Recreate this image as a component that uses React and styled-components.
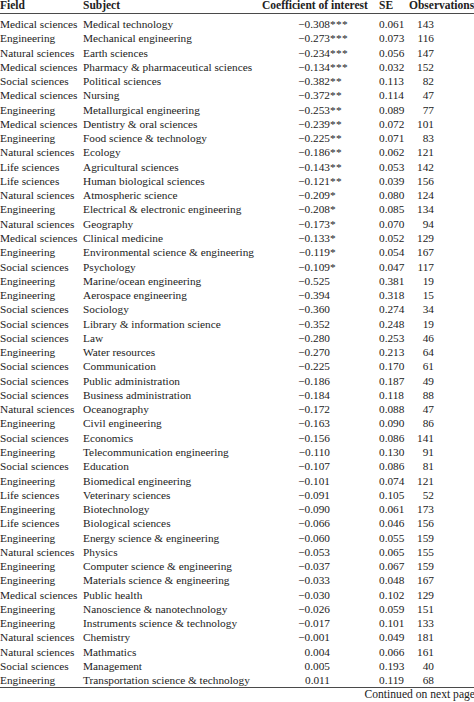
import React from "react";
import styled, { createGlobalStyle } from "styled-components";

const GlobalStyle = createGlobalStyle`
  html, body {
    margin: 0;
    padding: 0;
    background: #ffffff;
  }
  body {
    font-family: "Liberation Serif", "Times New Roman", serif;
    color: #222222;
    overflow: hidden;
  }
`;

const Page = styled.div`
  width: 474px;
  height: 702px;
  overflow: hidden;
  font-size: 11.3px;
`;

const Grid = styled.div`
  display: grid;
  grid-template-columns: 83px 179px 117px 30px 1fr;
  white-space: nowrap;
`;

const HeaderRow = styled(Grid)`
  margin-top: -1px;
  height: 14px;
  line-height: 13px;
  font-weight: bold;
  font-size: 11.5px;
  border-bottom: 1px solid #4a4a4a;
`;

const Body = styled.div`
  padding-top: 3px;
  border-bottom: 1px solid #4a4a4a;
`;

const Row = styled(Grid)`
  height: 14.28px;
  line-height: 14.28px;
`;

const Cell = styled.div`
  overflow: visible;
`;

const Coef = styled.div`
  display: flex;
`;

const CoefNum = styled.span`
  width: 68px;
  text-align: right;
`;

const Stars = styled.span`
  letter-spacing: 0.4px;
`;

const Obs = styled.span`
  display: inline-block;
  width: 25px;
  text-align: right;
`;

const Footer = styled.div`
  text-align: right;
  margin-right: -1px;
  line-height: 13px;
  font-size: 11.6px;
`;

const rows = [
  ["Medical sciences", "Medical technology", "−0.308", "***", "0.061", 143],
  ["Engineering", "Mechanical engineering", "−0.273", "***", "0.073", 116],
  ["Natural sciences", "Earth sciences", "−0.234", "***", "0.056", 147],
  ["Medical sciences", "Pharmacy & pharmaceutical sciences", "−0.134", "***", "0.032", 152],
  ["Social sciences", "Political sciences", "−0.382", "**", "0.113", 82],
  ["Medical sciences", "Nursing", "−0.372", "**", "0.114", 47],
  ["Engineering", "Metallurgical engineering", "−0.253", "**", "0.089", 77],
  ["Medical sciences", "Dentistry & oral sciences", "−0.239", "**", "0.072", 101],
  ["Engineering", "Food science & technology", "−0.225", "**", "0.071", 83],
  ["Natural sciences", "Ecology", "−0.186", "**", "0.062", 121],
  ["Life sciences", "Agricultural sciences", "−0.143", "**", "0.053", 142],
  ["Life sciences", "Human biological sciences", "−0.121", "**", "0.039", 156],
  ["Natural sciences", "Atmospheric science", "−0.209", "*", "0.080", 124],
  ["Engineering", "Electrical & electronic engineering", "−0.208", "*", "0.085", 134],
  ["Natural sciences", "Geography", "−0.173", "*", "0.070", 94],
  ["Medical sciences", "Clinical medicine", "−0.133", "*", "0.052", 129],
  ["Engineering", "Environmental science & engineering", "−0.119", "*", "0.054", 167],
  ["Social sciences", "Psychology", "−0.109", "*", "0.047", 117],
  ["Engineering", "Marine/ocean engineering", "−0.525", "", "0.381", 19],
  ["Engineering", "Aerospace engineering", "−0.394", "", "0.318", 15],
  ["Social sciences", "Sociology", "−0.360", "", "0.274", 34],
  ["Social sciences", "Library & information science", "−0.352", "", "0.248", 19],
  ["Social sciences", "Law", "−0.280", "", "0.253", 46],
  ["Engineering", "Water resources", "−0.270", "", "0.213", 64],
  ["Social sciences", "Communication", "−0.225", "", "0.170", 61],
  ["Social sciences", "Public administration", "−0.186", "", "0.187", 49],
  ["Social sciences", "Business administration", "−0.184", "", "0.118", 88],
  ["Natural sciences", "Oceanography", "−0.172", "", "0.088", 47],
  ["Engineering", "Civil engineering", "−0.163", "", "0.090", 86],
  ["Social sciences", "Economics", "−0.156", "", "0.086", 141],
  ["Engineering", "Telecommunication engineering", "−0.110", "", "0.130", 91],
  ["Social sciences", "Education", "−0.107", "", "0.086", 81],
  ["Engineering", "Biomedical engineering", "−0.101", "", "0.074", 121],
  ["Life sciences", "Veterinary sciences", "−0.091", "", "0.105", 52],
  ["Engineering", "Biotechnology", "−0.090", "", "0.061", 173],
  ["Life sciences", "Biological sciences", "−0.066", "", "0.046", 156],
  ["Engineering", "Energy science & engineering", "−0.060", "", "0.055", 159],
  ["Natural sciences", "Physics", "−0.053", "", "0.065", 155],
  ["Engineering", "Computer science & engineering", "−0.037", "", "0.067", 159],
  ["Engineering", "Materials science & engineering", "−0.033", "", "0.048", 167],
  ["Medical sciences", "Public health", "−0.030", "", "0.102", 129],
  ["Engineering", "Nanoscience & nanotechnology", "−0.026", "", "0.059", 151],
  ["Engineering", "Instruments science & technology", "−0.017", "", "0.101", 133],
  ["Natural sciences", "Chemistry", "−0.001", "", "0.049", 181],
  ["Natural sciences", "Mathmatics", "0.004", "", "0.066", 161],
  ["Social sciences", "Management", "0.005", "", "0.193", 40],
  ["Engineering", "Transportation science & technology", "0.011", "", "0.119", 68],
];

export default function App() {
  return (
    <Page>
      <GlobalStyle />
      <HeaderRow>
        <Cell>Field</Cell>
        <Cell>Subject</Cell>
        <Cell>Coefficient of interest</Cell>
        <Cell>SE</Cell>
        <Cell>Observations</Cell>
      </HeaderRow>
      <Body>
        {rows.map(([field, subject, coef, stars, se, obs]) => (
          <Row key={subject}>
            <Cell>{field}</Cell>
            <Cell>{subject}</Cell>
            <Coef>
              <CoefNum>{coef}</CoefNum>
              <Stars>{stars}</Stars>
            </Coef>
            <Cell>{se}</Cell>
            <Cell>
              <Obs>{obs}</Obs>
            </Cell>
          </Row>
        ))}
      </Body>
      <Footer>Continued on next page</Footer>
    </Page>
  );
}
